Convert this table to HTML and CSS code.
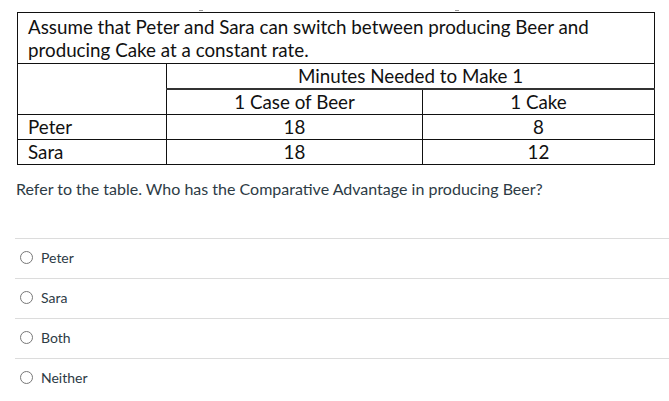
FILE: index.html
```html
<!DOCTYPE html>
<html>
<head>
<meta charset="utf-8">
<link rel="stylesheet" href="styles.css">
</head>
<body>
<div class="page">
  <div class="marks"><span class="mark m1"></span><span class="mark m2"></span></div>
  <table class="data">
    <colgroup><col class="c1"><col class="c2"><col class="c3"></colgroup>
    <tr class="r-cap"><td colspan="3" class="cap">Assume that Peter and Sara can switch between producing Beer and producing Cake at a constant rate.</td></tr>
    <tr class="r-row"><td rowspan="2"></td><td colspan="2" class="center thick-b">Minutes Needed to Make 1</td></tr>
    <tr class="r-row"><td class="center">1 Case of Beer</td><td class="center">1 Cake</td></tr>
    <tr class="r-row"><td class="name">Peter</td><td class="center">18</td><td class="center">8</td></tr>
    <tr class="r-row"><td class="name">Sara</td><td class="center">18</td><td class="center">12</td></tr>
  </table>
  <p class="question">Refer to the table. Who has the Comparative Advantage in producing Beer?</p>
  <div class="answers">
    <label class="answer"><span class="radio"></span><span class="lbl">Peter</span></label>
    <label class="answer"><span class="radio"></span><span class="lbl">Sara</span></label>
    <label class="answer"><span class="radio"></span><span class="lbl">Both</span></label>
    <label class="answer"><span class="radio"></span><span class="lbl">Neither</span></label>
  </div>
</div>
</body>
</html>
```
FILE: styles.css
```css
html, body { margin: 0; padding: 0; background: #fff; }
.page { width: 669px; height: 401px; overflow: hidden; font-family: Lato, "Open Sans", sans-serif; color: #2d3b45; }
.marks { height: 12px; position: relative; }
.mark { position: absolute; top: 10px; width: 4px; height: 1px; background: #999; }
.m1 { left: 199px; }
.m2 { left: 455px; }
.data { margin-left: 17px; border-collapse: collapse; table-layout: fixed; width: 637px; font-family: Lato, "Liberation Sans", sans-serif; color: #111; font-size: 18.8px; }
.c1 { width: 149px; }
.c2 { width: 256px; }
.c3 { width: 232px; }
.data td { border: 1px solid #111; padding: 0 0 0 10px; line-height: 22px; vertical-align: middle; }
.data td.center { text-align: center; padding: 0; }
.r-cap td { height: 48px; padding: 1px 10px 1px 10px; line-height: 23px; }
.r-row td { height: 24px; }
.data td.thick-b { border-bottom: 2px solid #333; }
.question { margin: 14px 0 0 16px; font-size: 16px; line-height: 20px; color: #2d3b45; }
.answers { margin: 39px 0 0 15px; }
.answer { display: flex; align-items: center; height: 37px; padding-bottom: 2px; border-top: 1px solid #dcdcdc; }
.radio { width: 11px; height: 11px; border: 1px solid #777; border-radius: 50%; margin-left: 5px; box-sizing: content-box; }
.lbl { margin-left: 8px; font-size: 14px; color: #2d3b45; }
```
